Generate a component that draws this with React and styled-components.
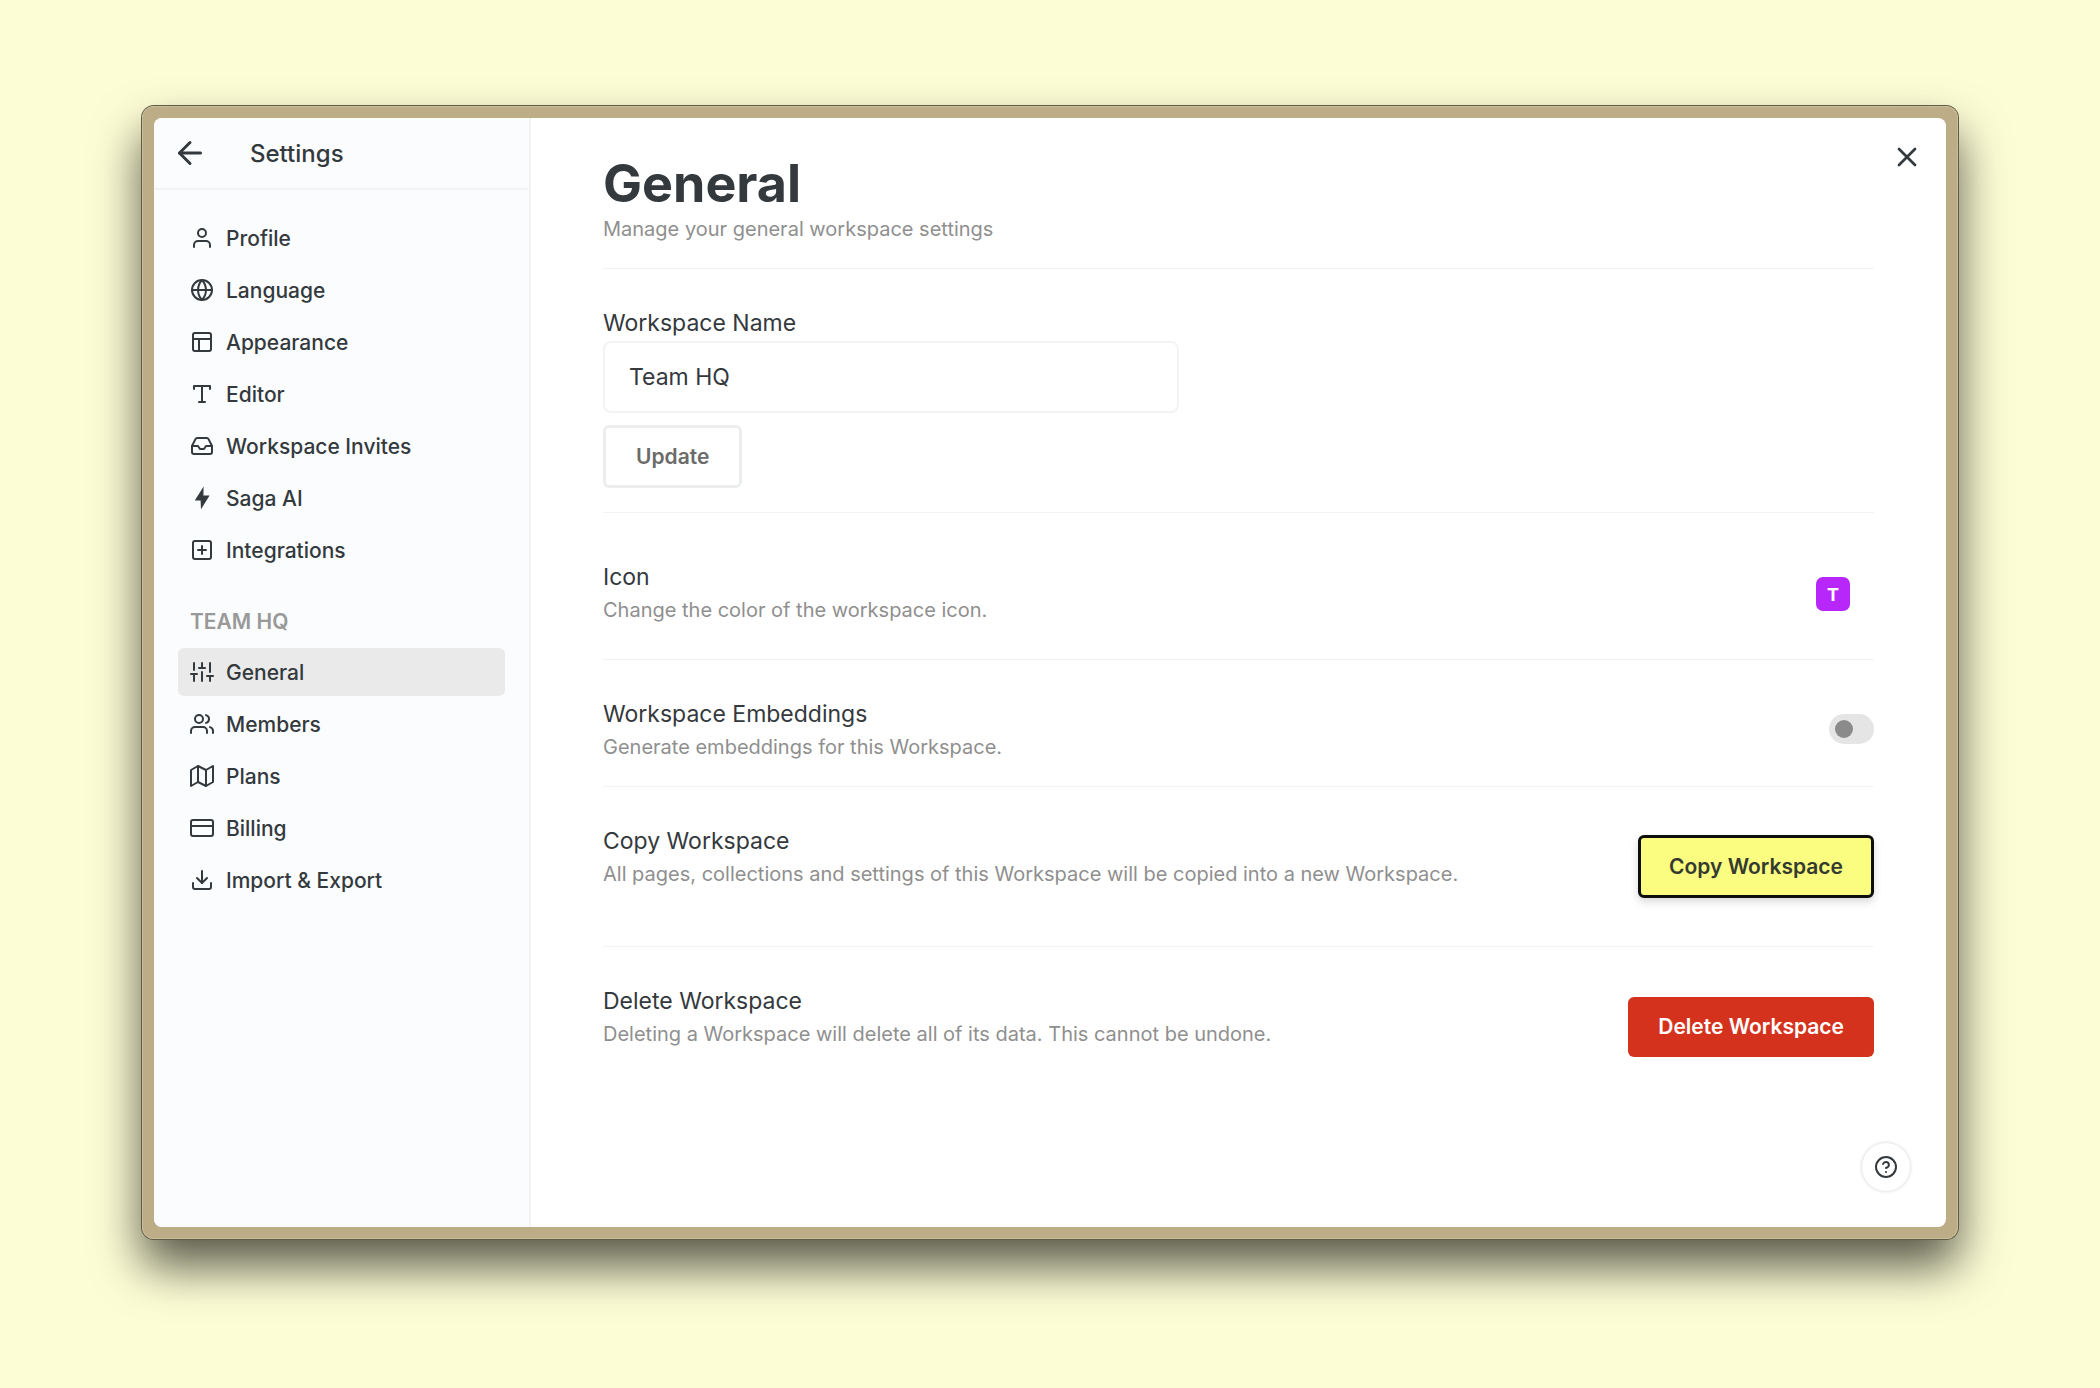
import { useState } from 'react';
import styled, { createGlobalStyle } from 'styled-components';
import {
  FiArrowLeft,
  FiCreditCard,
  FiDownload,
  FiGlobe,
  FiHelpCircle,
  FiInbox,
  FiLayout,
  FiMap,
  FiPlusSquare,
  FiSliders,
  FiType,
  FiUser,
  FiUsers,
  FiX,
} from 'react-icons/fi';

const GlobalStyle = createGlobalStyle`
  :root {
    --text-primary: #34393d;
    --text-secondary: #8f8f8f;
    --border-primary: #f2f3f3;
    --bg-sidebar: #fafcfd;
    --accent: #fbfd80;
    --danger: #d5321e;
  }

  * {
    box-sizing: border-box;
  }

  body {
    margin: 0;
    background: #fdfdd5;
    color: var(--text-primary);
    font-family: Inter, "Liberation Sans", sans-serif;
  }

  button, input {
    font-family: inherit;
    color: inherit;
  }
`;

const Desktop = styled.div`
  min-height: 100vh;
  display: flex;
  padding: 106px 142px 149px;
`;

const WindowFrame = styled.div`
  flex: 1;
  display: flex;
  padding: 12px;
  border-radius: 12px;
  background: #bdad86;
  box-shadow:
    inset 0 0 0 1px #c9bd9b,
    0 0 0 1px #5f5b45,
    0 27px 48px rgba(0, 0, 0, 0.66);
`;

const WindowBody = styled.div`
  position: relative;
  flex: 1;
  display: flex;
  border-radius: 8px;
  background: #fff;
  overflow: hidden;
`;

const Sidebar = styled.aside`
  width: 377px;
  flex-shrink: 0;
  background: var(--bg-sidebar);
  border-right: 2px solid var(--border-primary);
`;

const SidebarHeader = styled.header`
  display: flex;
  align-items: center;
  gap: 42px;
  height: 72px;
  padding: 0 18px;
  border-bottom: 2px solid var(--border-primary);
`;

const SidebarTitle = styled.h2`
  margin: 0;
  font-size: 24px;
  font-weight: 500;
`;

const IconButton = styled.button`
  display: flex;
  padding: 0;
  border: none;
  background: none;
  cursor: pointer;
`;

const CloseButton = styled(IconButton)`
  position: absolute;
  top: 23px;
  right: 23px;
`;

const HelpButton = styled(IconButton)`
  position: absolute;
  right: 36px;
  bottom: 36px;
  width: 48px;
  height: 48px;
  align-items: center;
  justify-content: center;
  border-radius: 50%;
  background: #fff;
  box-shadow: 0 0 3px 1px rgba(0, 0, 0, 0.12);
`;

const Nav = styled.nav`
  padding: 24px;
`;

const NavList = styled.ul`
  display: flex;
  flex-direction: column;
  gap: 4px;
  margin: 0;
  padding: 0;
  list-style: none;
`;

const NavLink = styled.a`
  display: flex;
  align-items: center;
  gap: 12px;
  height: 48px;
  padding: 0 12px;
  border-radius: 6px;
  background: ${({ $active }) => ($active ? '#eaeaea' : 'transparent')};
  color: inherit;
  font-size: 21px;
  font-weight: 500;
  text-decoration: none;

  svg {
    flex-shrink: 0;
  }
`;

const NavHeading = styled.h3`
  margin: 32px 0 10px;
  padding: 0 12px;
  color: #999;
  font-size: 21px;
  line-height: 32px;
  font-weight: 600;
  text-transform: uppercase;
`;

const Main = styled.main`
  flex: 1;
  min-width: 0;
  padding: 0 72px;
`;

const PageHeader = styled.header`
  padding: 36px 0 24px;
  border-bottom: 1px solid var(--border-primary);
`;

const PageTitle = styled.h1`
  margin: 0;
  font-size: 52px;
  line-height: 60px;
  font-weight: 700;
`;

const Description = styled.p`
  margin: 0;
  color: var(--text-secondary);
  font-size: 20px;
  line-height: 30px;
`;

const Section = styled.section`
  padding: 36px 0 ${({ $roomy }) => ($roomy ? '36px' : '24px')};

  & + & {
    border-top: 1px solid var(--border-primary);
  }
`;

const Row = styled(Section)`
  display: flex;
  align-items: ${({ $roomy }) => ($roomy ? 'flex-start' : 'center')};
  justify-content: space-between;
  gap: 24px;
`;

const SectionTitle = styled.h2`
  margin: 0;
  font-size: 23px;
  line-height: 36px;
  font-weight: 400;
`;

const FieldLabel = styled.label`
  display: block;
  font-size: 23px;
  line-height: 36px;
`;

const TextInput = styled.input`
  display: block;
  width: 576px;
  max-width: 100%;
  height: 72px;
  margin-bottom: 12px;
  padding: 0 24px;
  border: 2px solid var(--border-primary);
  border-radius: 8px;
  background: #fff;
  font-size: 23px;
`;

const Button = styled.button`
  height: 63px;
  padding: 0 30px;
  border: 3px solid #eceeee;
  border-radius: 6px;
  background: #fff;
  color: #6b6b6b;
  font-size: 21px;
  font-weight: 600;
  white-space: nowrap;
  cursor: pointer;
`;

const PrimaryButton = styled(Button)`
  padding: 0 28px;
  border-color: #0d0f0c;
  background: var(--accent);
  color: #343a2f;
  box-shadow: 0 4px 8px rgba(0, 0, 0, 0.15);
`;

const DangerButton = styled(Button)`
  height: 60px;
  border: none;
  background: var(--danger);
  color: #fff;
`;

const ActionSlot = styled.div`
  display: flex;
  align-items: center;
  height: 87px;
`;

const BadgeSlot = styled.div`
  padding: 28px 24px 24px;
`;

const WorkspaceBadge = styled.button`
  display: flex;
  align-items: center;
  justify-content: center;
  width: 34px;
  height: 34px;
  padding: 0;
  border: none;
  border-radius: 7px;
  background: #b827fa;
  color: #fff;
  font-size: 18px;
  font-weight: 700;
  cursor: pointer;
`;

const Toggle = styled.input`
  appearance: none;
  display: flex;
  align-items: center;
  width: 45px;
  height: 30px;
  margin: 0;
  padding: 0 6px;
  border-radius: 15px;
  background: #e5e5e6;
  cursor: pointer;

  &::before {
    content: '';
    width: 18px;
    height: 18px;
    border-radius: 50%;
    background: #8b8b8b;
  }

  &:checked {
    justify-content: flex-end;
    background: var(--accent);
  }
`;

// narrower, solid version of the feather bolt
function BoltIcon({ size }) {
  return (
    <svg width={size} height={size} viewBox="0 0 24 24" fill="currentColor" aria-hidden="true">
      <path d="M13.6 0.6 4.8 14.4H10.6L11 23.2 19.6 9.4H13.4Z" />
    </svg>
  );
}

const personalItems = [
  { label: 'Profile', icon: FiUser },
  { label: 'Language', icon: FiGlobe },
  { label: 'Appearance', icon: FiLayout },
  { label: 'Editor', icon: FiType },
  { label: 'Workspace Invites', icon: FiInbox },
  { label: 'Saga AI', icon: BoltIcon },
  { label: 'Integrations', icon: FiPlusSquare },
];

const workspaceItems = [
  { label: 'General', icon: FiSliders },
  { label: 'Members', icon: FiUsers },
  { label: 'Plans', icon: FiMap },
  { label: 'Billing', icon: FiCreditCard },
  { label: 'Import & Export', icon: FiDownload },
];

function NavItems({ items, active, onSelect }) {
  return (
    <NavList>
      {items.map(({ label, icon: Icon }) => (
        <li key={label}>
          <NavLink
            href="#"
            $active={label === active}
            aria-current={label === active ? 'page' : undefined}
            onClick={() => onSelect(label)}
          >
            <Icon size={24} />
            {label}
          </NavLink>
        </li>
      ))}
    </NavList>
  );
}

function App() {
  const [active, setActive] = useState('General');
  const [name, setName] = useState('Team HQ');
  const [embeddings, setEmbeddings] = useState(false);

  return (
    <Desktop>
      <GlobalStyle />
      <WindowFrame>
        <WindowBody>
          <Sidebar>
            <SidebarHeader>
              <IconButton aria-label="Back">
                <FiArrowLeft size={36} />
              </IconButton>
              <SidebarTitle>Settings</SidebarTitle>
            </SidebarHeader>
            <Nav>
              <NavItems items={personalItems} active={active} onSelect={setActive} />
              <NavHeading>Team HQ</NavHeading>
              <NavItems items={workspaceItems} active={active} onSelect={setActive} />
            </Nav>
          </Sidebar>

          <Main>
            <PageHeader>
              <PageTitle>General</PageTitle>
              <Description>Manage your general workspace settings</Description>
            </PageHeader>

            <Section>
              <FieldLabel htmlFor="workspace-name">Workspace Name</FieldLabel>
              <TextInput
                id="workspace-name"
                type="text"
                value={name}
                onChange={(e) => setName(e.target.value)}
              />
              <Button>Update</Button>
            </Section>

            <Row>
              <div>
                <SectionTitle>Icon</SectionTitle>
                <Description>Change the color of the workspace icon.</Description>
              </div>
              <BadgeSlot>
                <WorkspaceBadge aria-label="Workspace icon color">T</WorkspaceBadge>
              </BadgeSlot>
            </Row>

            <Row>
              <div>
                <SectionTitle as="label" htmlFor="embeddings">Workspace Embeddings</SectionTitle>
                <Description>Generate embeddings for this Workspace.</Description>
              </div>
              <Toggle
                id="embeddings"
                type="checkbox"
                checked={embeddings}
                onChange={(e) => setEmbeddings(e.target.checked)}
              />
            </Row>

            <Row $roomy>
              <div>
                <SectionTitle>Copy Workspace</SectionTitle>
                <Description>
                  All pages, collections and settings of this Workspace will be copied into a new Workspace.
                </Description>
              </div>
              <ActionSlot>
                <PrimaryButton>Copy Workspace</PrimaryButton>
              </ActionSlot>
            </Row>

            <Row $roomy>
              <div>
                <SectionTitle>Delete Workspace</SectionTitle>
                <Description>
                  Deleting a Workspace will delete all of its data. This cannot be undone.
                </Description>
              </div>
              <ActionSlot>
                <DangerButton>Delete Workspace</DangerButton>
              </ActionSlot>
            </Row>
          </Main>

          <CloseButton aria-label="Close">
            <FiX size={32} />
          </CloseButton>
          <HelpButton aria-label="Help">
            <FiHelpCircle size={24} />
          </HelpButton>
        </WindowBody>
      </WindowFrame>
    </Desktop>
  );
}

export default App;
